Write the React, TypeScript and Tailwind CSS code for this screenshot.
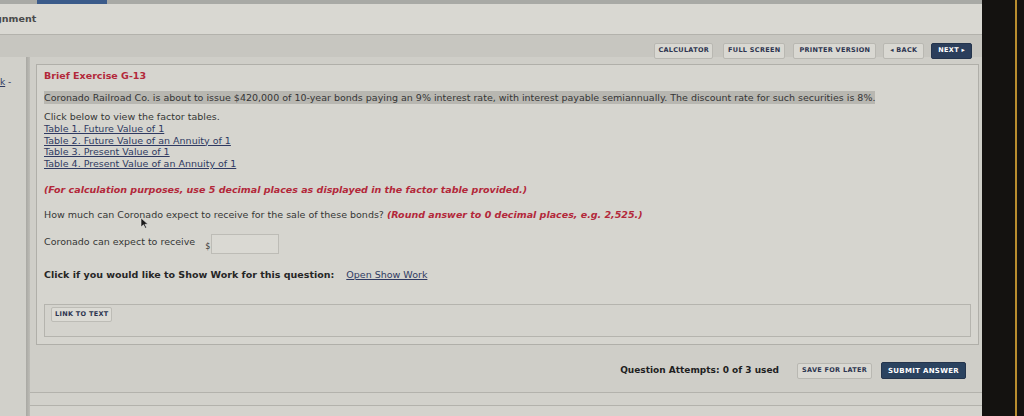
import React from "react";

const factorTables = [
  "Table 1. Future Value of 1",
  "Table 2. Future Value of an Annuity of 1",
  "Table 3. Present Value of 1",
  "Table 4. Present Value of an Annuity of 1",
];

const SmallButton = ({ label, dark, pad = "px-[6px]" }: { label: string; dark?: boolean; pad?: string }) => (
  <button
    className={`flex h-[16px] items-center rounded-[2px] border ${pad} text-[6.5px] font-bold tracking-[0.3px] ${
      dark
        ? "border-[#24344c] bg-[#2b3e5b] text-white"
        : "border-[#b9b8b2] bg-[#d9d8d2] text-[#2d3550]"
    }`}
  >
    {label}
  </button>
);

const App = () => {
  return (
    <div className="flex h-[416px] w-[1024px] overflow-hidden font-['DejaVu_Sans',Verdana,sans-serif] text-[#353535]">
      {/* SCREEN */}
      <div className="flex w-[982px] flex-col bg-[#cfcec8]">
        {/* TOP STRIP */}
        <div className="flex h-[4px] bg-[#a8a9a5]">
          <div className="ml-[37px] w-[70px] bg-[#3b5b8a]" />
        </div>
        {/* HEADER - page title is cut at the left edge, as in the photo */}
        <div className="flex h-[31px] items-center border-b border-[#b3b2ac] bg-[#d9d8d2] text-[9.5px] font-bold text-[#4a4a4a]">
          <span className="-ml-[5px]">gnment</span>
        </div>
        {/* TOOLBAR */}
        <div className="relative z-10 flex h-[22px] items-start justify-end bg-[#c7c6c0] pr-[10px] pt-[8px]">
          <SmallButton label="CALCULATOR" pad="px-[3px]" />
          <div className="w-[10px]" />
          <SmallButton label="FULL SCREEN" pad="px-[4px]" />
          <div className="w-[8px]" />
          <SmallButton label="PRINTER VERSION" pad="px-[5px]" />
          <div className="w-[7px]" />
          <SmallButton label="◂ BACK" />
          <div className="w-[7px]" />
          <SmallButton label="NEXT ▸" dark />
        </div>
        {/* BODY */}
        <div className="flex flex-1">
          {/* SIDEBAR */}
          <div className="w-[26px] bg-[#d1d0ca] pt-[19px] text-[9px] text-[#2f3a62]">
            <span className="underline">k</span> -
          </div>
          <div className="w-[4px] bg-gradient-to-r from-[#a9a8a3] to-[#bdbcb6]" />
          {/* MAIN PANEL */}
          <div className="relative flex flex-1 flex-col bg-[#cfcec8]">
            <div className="ml-[6px] mr-[3px] mt-[7px] border border-[#b0afa9] bg-[#d6d5cf] px-[7px] pb-[7px] pt-[5px] text-[9.5px]">
              <div className="text-[9.5px] font-bold leading-[12px] text-[#b3283a]">
                Brief Exercise G-13
              </div>
              <div className="mt-[9px] leading-[13px]">
                <span className="bg-[#b8b7b1] py-[1px]">
                  Coronado Railroad Co. is about to issue $420,000 of 10-year bonds paying an 9% interest rate, with
                  interest payable semiannually. The discount rate for such securities is 8%.
                </span>
              </div>
              <div className="mt-[7px] leading-[11.8px]">
                <div>Click below to view the factor tables.</div>
                {factorTables.map((t) => (
                  <div key={t}>
                    <span className="text-[#2f3a62] underline">{t}</span>
                  </div>
                ))}
              </div>
              <div className="mt-[14px] font-bold italic leading-[12px] text-[#b3283a]">
                (For calculation purposes, use 5 decimal places as displayed in the factor table provided.)
              </div>
              <div className="mt-[13px] leading-[12px]">
                How much can Coronado expect to receive for the sale of these bonds?{" "}
                <span className="font-bold italic text-[#b3283a]">
                  (Round answer to 0 decimal places, e.g. 2,525.)
                </span>
              </div>
              <div className="mt-[13px] flex items-end leading-[12px]">
                <span className="mb-[6px]">Coronado can expect to receive</span>
                <span className="mb-[1px] ml-[10px] text-[8px]">$</span>
                <div className="ml-[1px] h-[20px] w-[68px] border border-[#bdbcb6] bg-[#dad9d3]" />
              </div>
              <div className="mt-[15px] flex items-center leading-[12px]">
                <span className="font-bold text-[#262626]">
                  Click if you would like to Show Work for this question:
                </span>
                <span className="ml-[12px] text-[#2f3a62] underline">Open Show Work</span>
              </div>
              <div className="mt-[23px] h-[33px] border border-[#b5b4ae] bg-[#d4d3cd] px-[6px] pt-[2px]">
                <button className="flex h-[15px] items-center rounded-[2px] border border-[#bdbcb6] bg-[#dcdbd5] px-[3px] text-[6.5px] font-bold tracking-[0.3px] text-[#2d3550]">
                  LINK TO TEXT
                </button>
              </div>
            </div>
            {/* ATTEMPTS */}
            <div className="flex h-[47px] items-center justify-end gap-[9px] pr-[16px] pt-[5px]">
              <span className="mr-[9px] text-[9px] font-bold text-[#1f1f1f]">
                Question Attempts: 0 of 3 used
              </span>
              <SmallButton label="SAVE FOR LATER" pad="px-[4px]" />
              <button className="flex h-[17px] items-center rounded-[2px] border border-[#24344c] bg-[#2b4360] px-[6px] text-[7px] font-bold tracking-[0.3px] text-white">
                SUBMIT ANSWER
              </button>
            </div>
            <div className="h-[14px] border-y border-[#b3b2ac] bg-[#d2d1cb]" />
            <div className="flex-1 bg-[#d4d3cd]" />
            {/* MOUSE POINTER */}
            <svg
              className="absolute left-[110px] top-[160px]"
              width="9"
              height="12"
              viewBox="0 0 9 12"
            >
              <path d="M1 1 L1 10 L3.5 7.8 L5.3 11.3 L6.6 10.6 L4.9 7.3 L8 7.3 Z" fill="#1a1a1a" stroke="#e5e5e5" strokeWidth="0.6" />
            </svg>
          </div>
        </div>
      </div>
      {/* BEZEL */}
      <div className="flex w-[42px] bg-[#141210]">
        <div className="ml-[33px] w-[2px] bg-[#b88c2e]" />
      </div>
    </div>
  );
};

export default App;
